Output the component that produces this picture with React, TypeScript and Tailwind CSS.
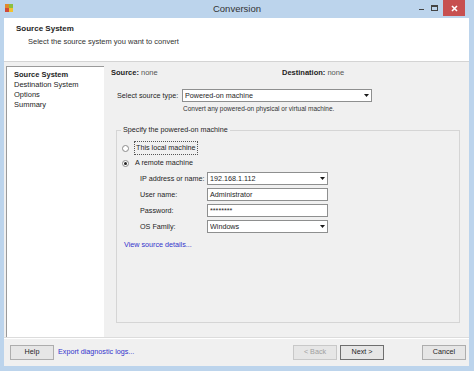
import React from "react";

const Arrow = () => (
  <span className="flex h-full w-[10px] items-center justify-center">
    <svg width="5" height="3" viewBox="0 0 5 3">
      <path d="M0 0h5L2.5 3z" fill="#1a1a1a" />
    </svg>
  </span>
);

const Combo = ({ value, className }: { value: string; className: string }) => (
  <div
    className={`flex h-[13px] items-center border border-[#8e8f8f] bg-white pl-[2px] ${className}`}
  >
    <span className="flex-1 truncate">{value}</span>
    <Arrow />
  </div>
);

const Field = ({ value }: { value: string }) => (
  <div className="flex h-[13px] w-[121px] items-center border border-[#8e8f8f] bg-white pl-[2px]">
    {value}
  </div>
);

const Radio = ({ checked }: { checked?: boolean }) => (
  <span className="flex h-[7px] w-[7px] items-center justify-center rounded-full border border-[#8a8a8a] bg-white">
    {checked && <span className="h-[3px] w-[3px] rounded-full bg-[#222]" />}
  </span>
);

const Button = ({
  label,
  className,
}: {
  label: string;
  className: string;
}) => (
  <div
    className={`flex h-[15px] w-[44px] items-center justify-center border bg-[#e6e6e6] ${className}`}
  >
    {label}
  </div>
);

const FormRow = ({
  label,
  children,
}: {
  label: string;
  children: React.ReactNode;
}) => (
  <div className="mt-[3px] flex h-[13px] items-center">
    <span className="ml-[23px] w-[67px] whitespace-nowrap">{label}</span>
    {children}
  </div>
);

export default function App() {
  return (
    <div
      className="flex h-[371px] w-[474px] flex-col whitespace-nowrap bg-[#bcd4ec] text-[7.2px] leading-[10px] text-[#1e1e1e]"
      style={{ fontFamily: '"Liberation Sans", Arial, sans-serif' }}
    >
      <div className="relative flex h-[18px] items-center justify-center">
        <div className="absolute left-[5px] top-[4px] grid h-[8px] w-[8px] grid-cols-2">
          <span className="bg-[#e08a2c]" />
          <span className="bg-[#8cbf3f]" />
          <span className="bg-[#d04a3a]" />
          <span className="bg-[#f2c230]" />
        </div>
        <span className="text-[9.5px] text-[#333]">Conversion</span>
        <div className="absolute right-[9px] top-0 flex h-[16px] items-center">
          <span className="mr-[7px] mt-[2px] h-[1px] w-[5px] bg-[#444]" />
          <span className="mr-[5px] h-[6px] w-[7px] border border-t-2 border-[#444]" />
          <div className="flex h-[16px] w-[22px] items-center justify-center bg-[#c75050]">
            <svg width="7" height="7" viewBox="0 0 7 7">
              <path d="M1 1l5 5M6 1l-5 5" stroke="#fff" strokeWidth="1.6" />
            </svg>
          </div>
        </div>
      </div>

      <div className="mb-[5px] ml-[4px] mr-[5px] flex flex-1 flex-col bg-[#f0f0f0]">
        <div className="h-[44px] border-b border-[#d4d4d4] bg-white pl-[12px] pt-[6px]">
          <div className="text-[8px] font-bold">Source System</div>
          <div className="mt-[3px] pl-[12px] text-[7.5px] text-[#333]">
            Select the source system you want to convert
          </div>
        </div>

        <div className="flex flex-1">
          <div className="ml-[2px] mt-[4px] w-[98px] border-l border-t border-[#9a9a9a] bg-white pl-[7px] pt-[3px] text-[7.5px]">
            <div className="font-bold">Source System</div>
            <div>Destination System</div>
            <div>Options</div>
            <div>Summary</div>
          </div>

          <div className="flex flex-1 flex-col pr-[9px]">
            <div className="ml-[7px] mt-[6px] flex text-[7.5px]">
              <span className="w-[171px]">
                <b>Source:</b> <span className="text-[#555]">none</span>
              </span>
              <span>
                <b>Destination:</b> <span className="text-[#555]">none</span>
              </span>
            </div>

            <div className="ml-[13px] mt-[11px] flex items-center">
              <span className="w-[65px]">Select source type:</span>
              <Combo value="Powered-on machine" className="w-[190px]" />
            </div>
            <div className="ml-[79px] mt-[2px] text-[6.5px] leading-[9px] text-[#333]">
              Convert any powered-on physical or virtual machine.
            </div>

            <fieldset className="ml-[12px] mt-[12px] h-[198px] border border-[#d5d5d5]">
              <legend className="ml-[4px] px-[2px]">Specify the powered-on machine</legend>
              <div className="mt-[6px] flex items-center">
                <span className="ml-[5px]">
                  <Radio />
                </span>
                <span className="ml-[5px] border border-dotted border-[#555] px-[1px] py-[1px]">
                  This local machine
                </span>
              </div>
              <div className="mt-[3px] flex items-center">
                <span className="ml-[5px]">
                  <Radio checked />
                </span>
                <span className="ml-[6px]">A remote machine</span>
              </div>
              <div className="h-[1px]" />
              <FormRow label="IP address or name:">
                <Combo value="192.168.1.112" className="w-[121px]" />
              </FormRow>
              <FormRow label="User name:">
                <Field value="Administrator" />
              </FormRow>
              <FormRow label="Password:">
                <Field value="********" />
              </FormRow>
              <FormRow label="OS Family:">
                <Combo value="Windows" className="w-[121px]" />
              </FormRow>
              <div className="ml-[7px] mt-[7px] text-[#3333cc]">View source details...</div>
            </fieldset>
          </div>
        </div>

        <div className="flex h-[29px] items-center border-t border-[#dcdcdc] shadow-[inset_0_1px_0_#fff]">
          <Button label="Help" className="ml-[6px] border-[#adadad]" />
          <span className="ml-[4px] text-[#3333cc]">Export diagnostic logs...</span>
          <div className="flex-1" />
          <Button label="< Back" className="border-[#c8c8c8] text-[#a0a0a0]" />
          <Button label="Next >" className="ml-[3px] border-[#6e6e6e]" />
          <Button label="Cancel" className="ml-[38px] mr-[3px] border-[#adadad]" />
        </div>
      </div>
    </div>
  );
}
